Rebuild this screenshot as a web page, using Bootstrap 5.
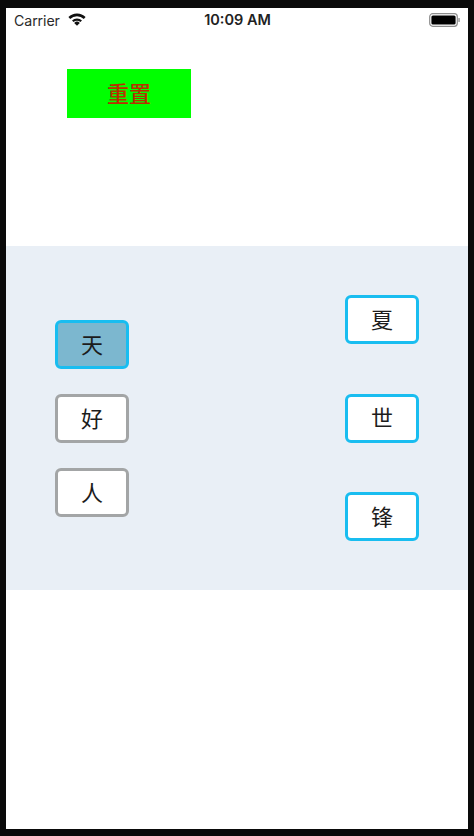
<!DOCTYPE html>
<html lang="zh">
<head>
<meta charset="utf-8">
<title>连线</title>
<link href="https://cdn.jsdelivr.net/npm/bootstrap@5.3.0/dist/css/bootstrap.min.css" rel="stylesheet">
<style>
html, body { height: 100%; margin: 0; background: #0a0a0a; }
body { font-family: "Liberation Sans", "Noto Sans CJK SC", sans-serif; overflow: hidden; }
.frame-shell { width: 474px; height: 836px; padding: 8px 6px 7px 6px; }
.phone-screen { height: 821px; background: #fff; }
.status-row { height: 24px; padding: 1px 8px 0 8px; font-size: 14.5px; color: #222; position: relative; }
.carrier-txt { color: #2a2a2a; font-family: "Inter", "Liberation Sans", sans-serif; font-size: 14.2px; letter-spacing: -.1px; }
.clock-txt { font-family: "Inter", "Liberation Sans", sans-serif; font-weight: 600; font-size: 14.5px; width: 100%; text-align: center; position: absolute; left: 0; top: 3px; line-height: 18px; padding-left: 1px; }
.reset-zone { height: 214px; padding: 37px 0 0 61px; }
.reset-btn { width: 124px; height: 49px; background: #00ff00; color: #b83000; font-size: 22px; font-weight: 500; border: 0; border-radius: 0; padding: 0 0 2px; font-family: "Noto Sans CJK SC", sans-serif; }
.reset-btn:hover { background: #00ff00; color: #b83000; }
.match-panel { height: 344px; background: #e9eff6; padding: 0 49px; }
.word-col-l { padding-top: 74px; gap: 25px; }
.word-col-r { padding-top: 49px; gap: 49.5px; }
.word-tile { width: 74px; height: 49px; padding: 0 0 3px; background: #fff; color: #1c1c1c; font-size: 22px; border: 3px solid #19bdf0; border-radius: 6px; font-family: "Noto Sans CJK SC", sans-serif; }
.word-tile.idle-tile { border-color: #a3a5a6; }
.word-tile.active-tile { background: #7cb7cf; }
.wifi-mark { width: 18px; height: 13px; margin-left: 8px; margin-top: -1px; }
.batt-mark { width: 31px; height: 14px; margin-top: -1px; }
</style>
</head>
<body>
<div class="frame-shell">
  <div class="phone-screen d-flex flex-column">
    <div class="status-row d-flex align-items-center justify-content-between">
      <div class="d-flex align-items-center">
        <span class="carrier-txt">Carrier</span>
        <svg class="wifi-mark" viewBox="0 0 18 13" aria-hidden="true">
          <path d="M9 12.8 6.2 9.9a4 4 0 0 1 5.6 0Z" fill="#111"/>
          <path d="M9 5.4a7.2 7.2 0 0 1 5 2l-1.6 1.7a4.9 4.9 0 0 0-6.8 0L4 7.4a7.2 7.2 0 0 1 5-2Z" fill="#111"/>
          <path d="M9 .6a12 12 0 0 1 8.6 3.5L15.8 6A9.5 9.5 0 0 0 2.2 6L.4 4.1A12 12 0 0 1 9 .6Z" fill="#111"/>
        </svg>
      </div>
      <span class="clock-txt">10:09 AM</span>
      <svg class="batt-mark" viewBox="0 0 31 14" aria-hidden="true">
        <rect x=".7" y=".7" width="27.6" height="12.6" rx="3" fill="none" stroke="#8d8d8d" stroke-width="1.2"/>
        <rect x="2.4" y="2.4" width="24.2" height="9.2" rx="1.5" fill="#000"/>
        <rect x="29.4" y="5" width="1.3" height="4" rx=".6" fill="#8d8d8d"/>
      </svg>
    </div>
    <div class="reset-zone">
      <button type="button" class="btn reset-btn">重置</button>
    </div>
    <div class="match-panel d-flex justify-content-between align-items-start">
      <div class="word-col-l d-flex flex-column">
        <button type="button" class="btn word-tile active-tile">天</button>
        <button type="button" class="btn word-tile idle-tile">好</button>
        <button type="button" class="btn word-tile idle-tile">人</button>
      </div>
      <div class="word-col-r d-flex flex-column">
        <button type="button" class="btn word-tile">夏</button>
        <button type="button" class="btn word-tile">世</button>
        <button type="button" class="btn word-tile">锋</button>
      </div>
    </div>
  </div>
</div>
<script src="https://cdn.jsdelivr.net/npm/bootstrap@5.3.0/dist/js/bootstrap.bundle.min.js"></script>
</body>
</html>
